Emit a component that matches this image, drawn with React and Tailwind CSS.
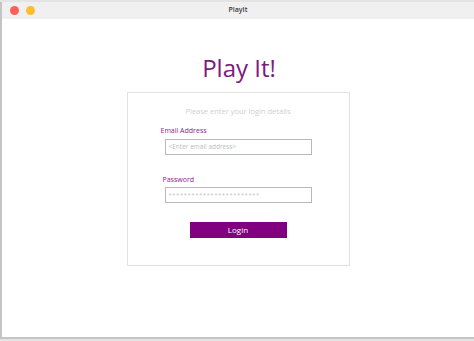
const App = () => {
  return (
    <div
      className="w-[474px] h-[341px] bg-[#e4e4e4] pt-[2px] overflow-hidden"
      style={{ fontFamily: '"Open Sans", "Noto Sans", sans-serif' }}
    >
      <div className="w-[474px] h-[337px] bg-white border-l-2 border-b-2 border-[#c4c4c4] flex flex-col">
        <div className="h-[17px] bg-[#f0f0f0] flex items-center relative shrink-0">
          <div className="flex items-center gap-[7px] pl-[8px]">
            <span className="w-[9px] h-[9px] rounded-full bg-[#fe5f57]" />
            <span className="w-[9px] h-[9px] rounded-full bg-[#febc2e]" />
          </div>
          <span className="absolute left-0 right-0 text-center text-[7px] font-semibold text-[#3a3a3a]">
            PlayIt
          </span>
        </div>

        <div className="flex flex-col items-center">
          <h1 className="mt-[33px] h-[32px] leading-[32px] text-[24px] text-[#7d1a7d] pl-[2px]">
            Play It!
          </h1>

          <div className="mt-[8px] w-[223px] h-[174px] border border-[#e2e2e2] flex flex-col">
            <p className="mt-[13px] text-center text-[7.5px] text-[#cfcfcf]">
              Please enter your login details
            </p>

            <label className="mt-[9px] ml-[33px] text-[7px] text-[#8b1a8b]">Email Address</label>
            <div className="mt-[2px] ml-[37px] w-[147px] h-[16px] border border-[#b8b8b8] flex items-center px-[3px]">
              <span className="text-[6.5px] text-[#bdbdbd]">&lt;Enter email address&gt;</span>
            </div>

            <label className="mt-[20px] ml-[35px] text-[7px] text-[#8b1a8b]">Password</label>
            <div className="mt-[2px] ml-[37px] w-[147px] h-[16px] border border-[#b8b8b8] flex items-center px-[3px]">
              <span className="text-[6px] text-[#c4c4c4] tracking-[0.5px]">************************</span>
            </div>

            <button className="mt-[19px] ml-[62px] w-[97px] h-[16px] bg-[#800080] text-white text-[8px] flex items-center justify-center">
              Login
            </button>
          </div>
        </div>
      </div>
    </div>
  );
};

export default App;
